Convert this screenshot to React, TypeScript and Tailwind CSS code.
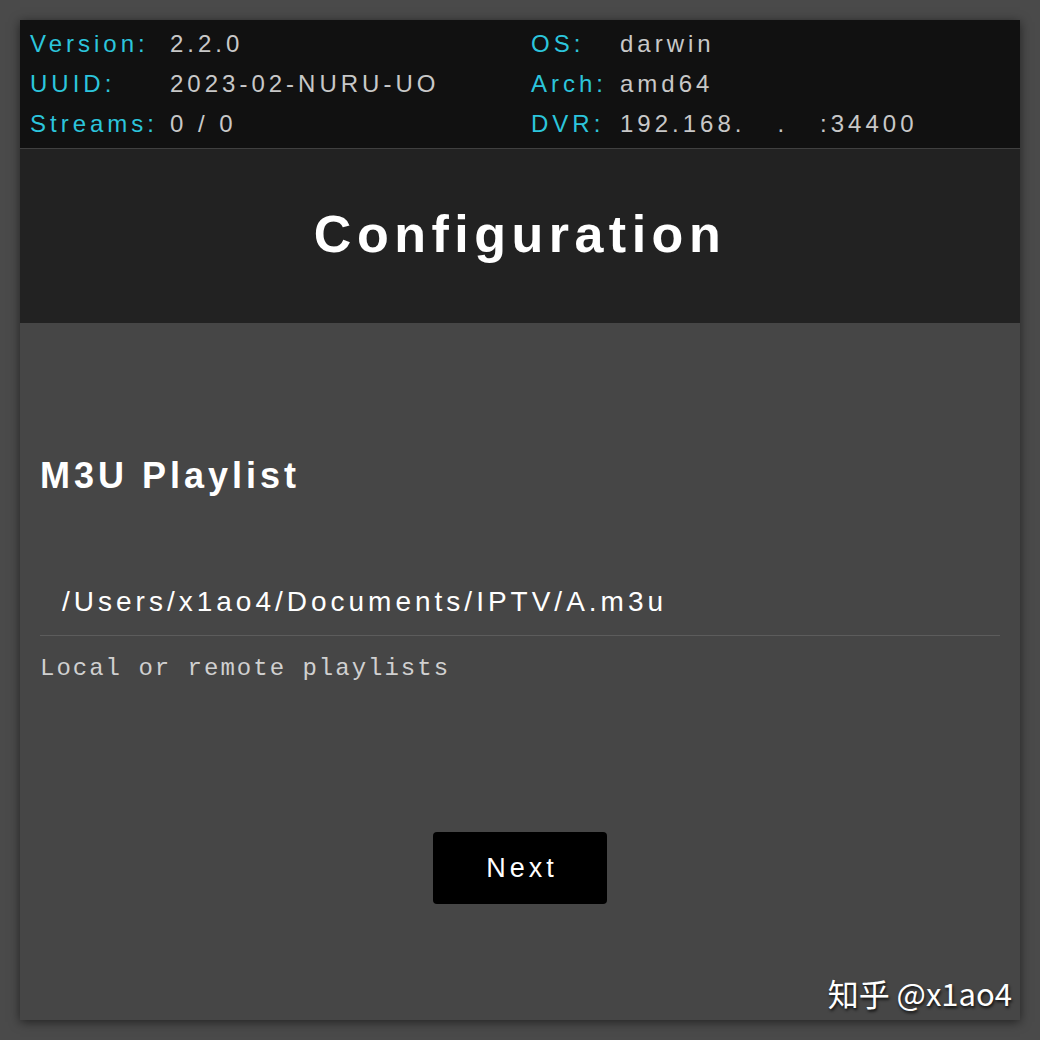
const InfoRow = ({ label, value, labelWidth }: { label: string; value: string; labelWidth: string }) => {
  return (
    <div className="flex h-10 items-center">
      <span className={`${labelWidth} shrink-0 text-[#2cc5dc]`}>{label}</span>
      <span className="whitespace-pre text-[#c8c8c8]">{value}</span>
    </div>
  );
};

export default function App() {
  return (
    <div className="relative min-h-[1040px] w-[1040px] bg-[#4a4a4a] p-5 font-['Liberation_Sans',Arial,sans-serif]">
      <div className="flex h-[1000px] flex-col bg-[#464646] shadow-[0_2px_10px_rgba(0,0,0,0.55)]">
        {/* status header */}
        <div className="grid h-[129px] grid-cols-[501px_1fr] border-b border-[#404040] bg-[#111111] px-[10px] pt-[4px] text-[24px] tracking-[4px]">
          <div className="flex flex-col">
            <InfoRow label="Version:" value="2.2.0" labelWidth="w-[140px]" />
            <InfoRow label="UUID:" value="2023-02-NURU-UO" labelWidth="w-[140px]" />
            <InfoRow label="Streams:" value="0 / 0" labelWidth="w-[140px]" />
          </div>
          <div className="flex flex-col">
            <InfoRow label="OS:" value="darwin" labelWidth="w-[89px]" />
            <InfoRow label="Arch:" value="amd64" labelWidth="w-[89px]" />
            <InfoRow label="DVR:" value="192.168.   .   :34400" labelWidth="w-[89px]" />
          </div>
        </div>

        <div className="flex h-[174px] items-center justify-center bg-[#222222]">
          <h1 className="-mt-[4px] text-[52px] font-bold tracking-[5.5px] text-white">Configuration</h1>
        </div>

        <div className="flex flex-1 flex-col px-5">
          <h2 className="mt-[126px] text-[36px] font-bold tracking-[4px] text-white">M3U Playlist</h2>
          <div className="mt-[78px] border-b border-[#5c5c5c] pb-[12px] pl-[22px] pr-4 text-[28px] tracking-[4px] text-white">
            /Users/x1ao4/Documents/IPTV/A.m3u
          </div>
          <p className="mt-[15px] whitespace-pre font-['Liberation_Mono',monospace] text-[24px] tracking-[2px] text-[#d0d0d0]">
            Local or remote playlists
          </p>
          <div className="mt-[145px] flex justify-center">
            <button className="h-[72px] w-[174px] rounded-[4px] bg-black pl-[4px] text-[27px] tracking-[4px] text-white">
              Next
            </button>
          </div>
        </div>
      </div>

      <div className="absolute bottom-[24px] right-[28px] font-['Noto_Sans_CJK_SC',sans-serif] text-[31px] text-white [text-shadow:1px_2px_3px_rgba(0,0,0,0.8)]">
        知乎 @x1ao4
      </div>
    </div>
  );
}
